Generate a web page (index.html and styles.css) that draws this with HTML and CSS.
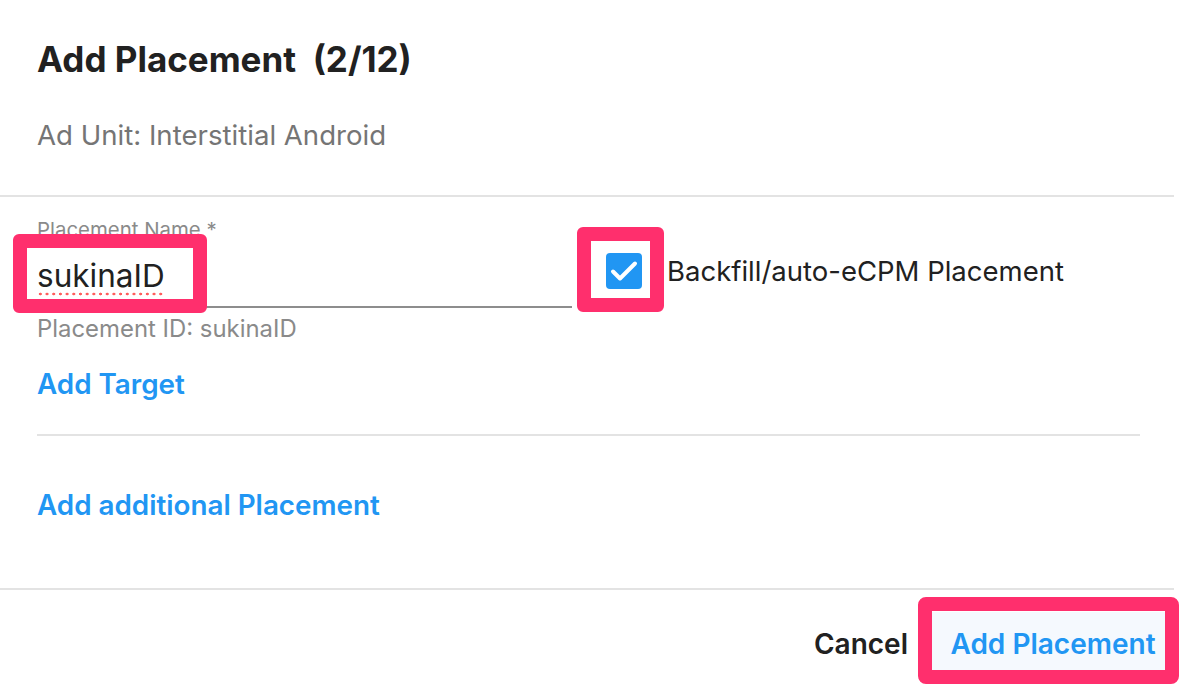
FILE: index.html
```html
<!DOCTYPE html>
<html lang="en">
<head>
<meta charset="utf-8">
<title>Add Placement</title>
<link rel="stylesheet" href="styles.css">
</head>
<body>
<div class="dialog">
  <header class="head">
    <h1 class="title">Add Placement&nbsp; (2/12)</h1>
    <p class="subtitle">Ad Unit: Interstitial Android</p>
  </header>
  <section class="content">
    <div class="row">
      <div class="field">
        <label class="field-label">Placement Name *</label>
        <div class="input">
          <span class="value"><span class="hl hl-input"></span><span class="spell">sukinaID</span></span>
        </div>
        <p class="helper">Placement ID: sukinaID</p>
      </div>
      <label class="check">
        <span class="box">
          <span class="hl hl-check"></span>
          <svg class="tick" width="36" height="36" viewBox="0 0 36 36"><path d="M7 18.5 L14 25.5 L29 10.5" fill="none" stroke="#fff" stroke-width="4" stroke-linecap="round" stroke-linejoin="round"/></svg>
        </span>
        <span class="check-text">Backfill/auto-eCPM Placement</span>
      </label>
    </div>
    <a class="link link-target">Add Target</a>
    <div class="sep"></div>
    <a class="link link-more">Add additional Placement</a>
  </section>
  <footer class="foot">
    <button class="btn btn-cancel">Cancel</button>
    <button class="btn btn-primary"><span class="hl hl-btn"></span><span class="btn-text">Add Placement</span></button>
  </footer>
</div>
</body>
</html>
```
FILE: styles.css
```css
* { box-sizing: border-box; }
html, body { margin: 0; padding: 0; background: #fff; }
body {
  font-family: Inter, "Noto Sans", "Liberation Sans", sans-serif;
  color: #212121;
  width: 1180px;
  height: 686px;
  overflow: hidden;
}
.dialog { width: 1174px; }

.head {
  padding: 37px 37px 0;
  border-bottom: 2px solid #e3e3e3;
  height: 197px;
}
.title {
  margin: 0;
  font-size: 35px;
  line-height: 44px;
  font-weight: 700;
  color: #212121;
}
.subtitle {
  margin: 38px 0 0;
  font-size: 27.6px;
  line-height: 32px;
  color: #757575;
}

.content {
  padding: 21px 34px 0 37px;
  height: 393px;
  border-bottom: 2px solid #e3e3e3;
}
.row { display: flex; align-items: flex-start; }
.field { width: 535px; }
.field-label {
  display: block;
  font-size: 20.4px;
  line-height: 24px;
  color: #8a8a8a;
}
.input {
  margin-top: 14px;
  height: 52px;
  border-bottom: 2px solid #8d8d8d;
  font-size: 31.5px;
  line-height: 40px;
  color: #212121;
}
.value { position: relative; display: inline-block; }
.spell {
  position: relative;
  background-image: radial-gradient(circle, #ff5c5c 1.3px, transparent 1.6px);
  background-size: 6.7px 4px;
  background-repeat: repeat-x;
  background-position: 0 100%;
  padding-bottom: 1px;
}
.hl {
  position: absolute;
  border: 14px solid #ff2f6d;
  border-radius: 6px;
  background: #fff;
}
.hl-input { left: -24px; top: -22px; width: 194px; height: 79px; }
.helper {
  margin: 7px 0 0;
  font-size: 23.9px;
  line-height: 28px;
  color: #8a8a8a;
}

.check {
  display: flex;
  align-items: center;
  margin-top: 35px;
}
.box {
  position: relative;
  margin-left: 34px;
  width: 36px;
  height: 36px;
  border-radius: 4px;
  background: #2196f3;
}
.hl-check { left: -29px; top: -26px; width: 87px; height: 85px; z-index: 0; }
.tick { position: relative; z-index: 1; display: block; background: #2196f3; border-radius: 4px; }
.check-text {
  margin-left: 25px;
  font-size: 27.5px;
  line-height: 32px;
  color: #212121;
}

.link {
  display: block;
  font-size: 27.8px;
  line-height: 34px;
  font-weight: 600;
  color: #2196f3;
  cursor: pointer;
}
.link-target { margin-top: 24px; }
.sep { margin-top: 33px; height: 2px; background: #e3e3e3; }
.link-more { margin-top: 52px; }

.foot {
  display: flex;
  justify-content: flex-end;
  align-items: center;
  gap: 24px;
  padding: 22px 8px 0 0;
}
.btn {
  font-family: inherit;
  font-size: 28px;
  font-weight: 600;
  border: 0;
  background: none;
  padding: 0;
  cursor: pointer;
}
.btn-cancel { color: #212121; height: 58px; line-height: 52px; padding-top: 6px; }
.btn-primary {
  position: relative;
  height: 58px;
  width: 234px;
  padding: 6px 0 0 8px;
  background: #f5f9fe;
  color: #2196f3;
}
.hl-btn { left: -14px; top: -15px; right: -13px; bottom: -14px; background: transparent; border-radius: 8px; }
.btn-text { position: relative; }
```
